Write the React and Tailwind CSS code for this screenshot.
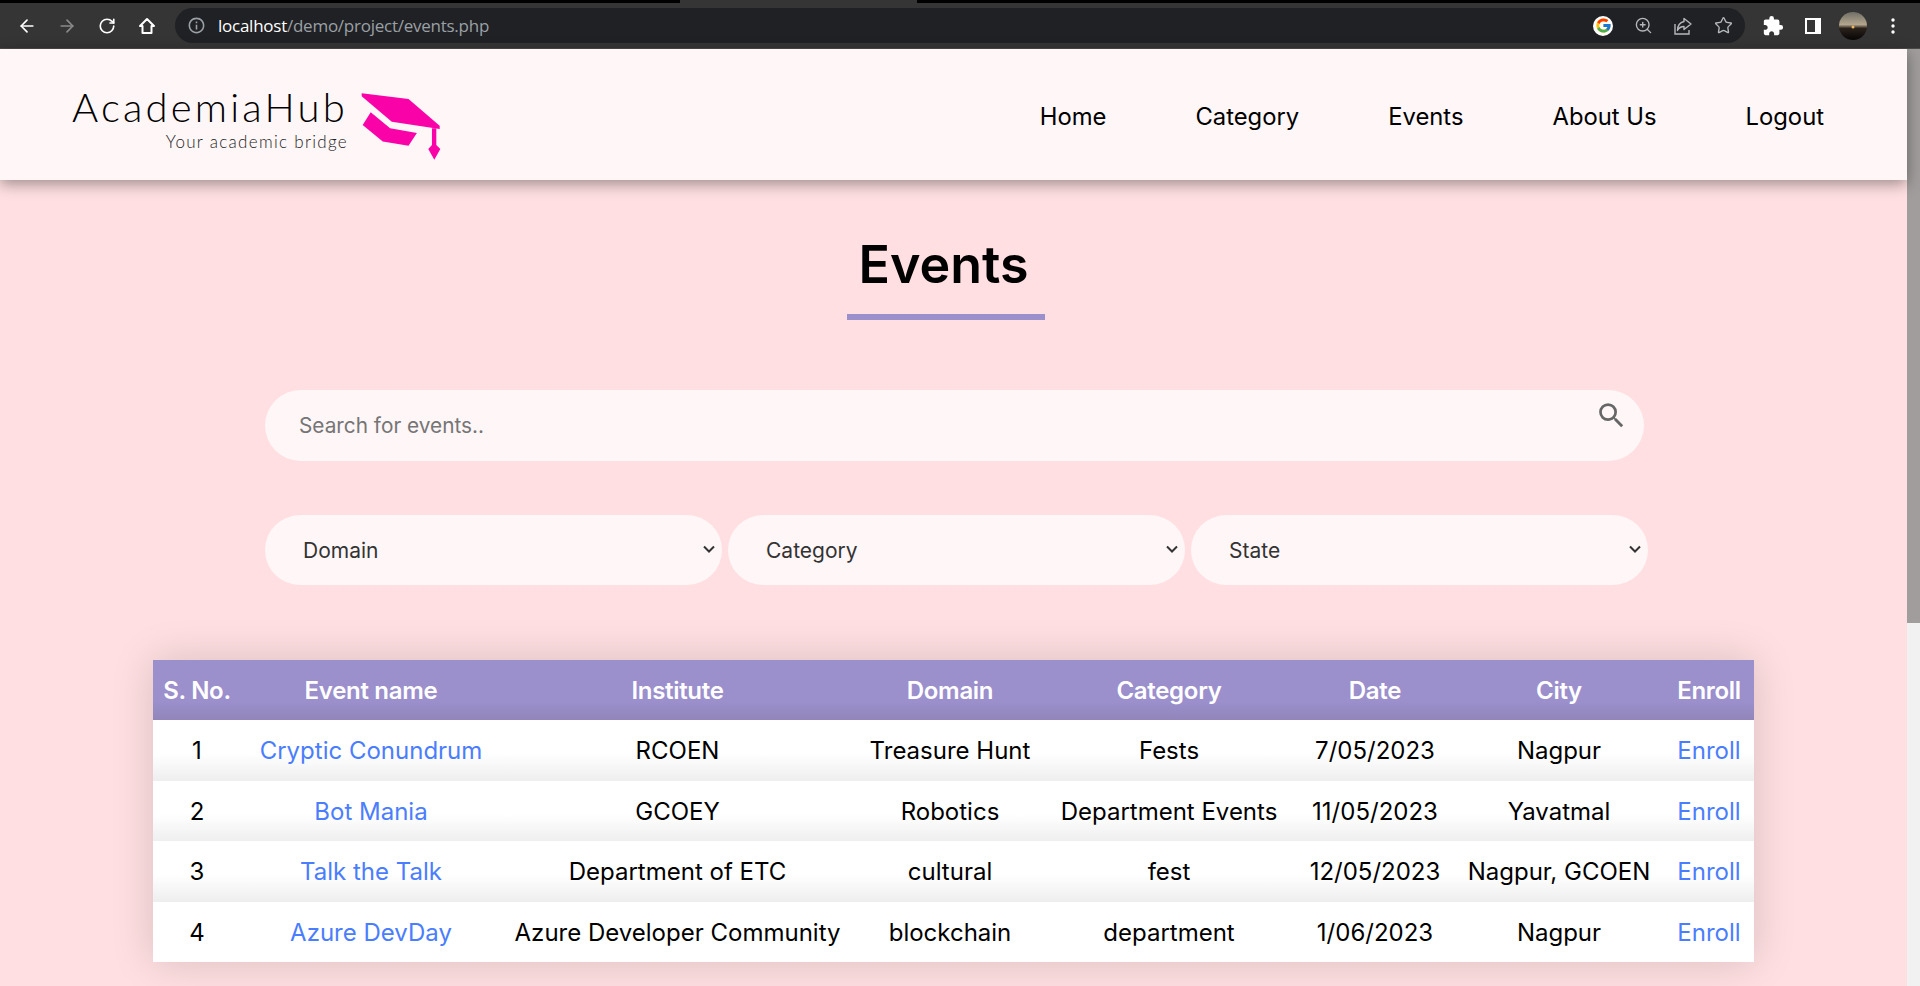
import React from 'react';
import { ArrowLeft, ArrowRight, RotateCw, ZoomIn, Star } from 'lucide-react';
import { MdSearch, MdExtension, MdInfoOutline } from 'react-icons/md';
import { FcGoogle } from 'react-icons/fc';

const events = [
  { id: 1, name: 'Cryptic Conundrum', institute: 'RCOEN', domain: 'Treasure Hunt', category: 'Fests', date: '7/05/2023', city: 'Nagpur' },
  { id: 2, name: 'Bot Mania', institute: 'GCOEY', domain: 'Robotics', category: 'Department Events', date: '11/05/2023', city: 'Yavatmal' },
  { id: 3, name: 'Talk the Talk', institute: 'Department of ETC', domain: 'cultural', category: 'fest', date: '12/05/2023', city: 'Nagpur, GCOEN' },
  { id: 4, name: 'Azure DevDay', institute: 'Azure Developer Community', domain: 'blockchain', category: 'department', date: '1/06/2023', city: 'Nagpur' },
];

const links = ['Home', 'Category', 'Events', 'About Us', 'Logout'];
const columns = ['S. No.', 'Event name', 'Institute', 'Domain', 'Category', 'Date', 'City', 'Enroll'];
const widths = ['w-[88px]', 'w-[260px]', 'w-[353px]', 'w-[192px]', 'w-[246px]', 'w-[166px]', 'w-[202px]', 'w-[94px] pl-[4px]'];

function Slot({ children }) {
  return <div className="w-10 h-[35px] flex items-center justify-center shrink-0">{children}</div>;
}

function BrowserBar() {
  return (
    <div className="bg-[#353535]">
      {/* tab strip */}
      <div className="flex h-[3px] bg-black">
        <div className="w-[680px]"></div>
        <div className="w-[237px] bg-[#353535]"></div>
      </div>
      <div className="flex h-[46px] pt-[5px] border-b border-[#4b4b4b]">
        <div className="flex pl-[7px] w-[175px] text-white">
          <Slot><ArrowLeft size={20} strokeWidth={2} /></Slot>
          <Slot><ArrowRight size={20} strokeWidth={2} className="text-[#8a8a8a]" /></Slot>
          <Slot><RotateCw size={18} strokeWidth={2.2} /></Slot>
          <Slot>
            <svg width="18" height="18" viewBox="0 0 18 18" fill="none" stroke="currentColor" strokeWidth="2">
              <path d="M9 2 2 9h2.5v7h9V9H16z" strokeLinejoin="round" />
            </svg>
          </Slot>
        </div>
        <div className="w-[1570px] h-[35px] bg-[#202124] rounded-full flex items-center pl-[12px] pr-[2px]">
          <MdInfoOutline size={19} className="text-[#9aa0a6]" />
          <div className="ml-[12px] text-[17px] tracking-[-0.25px] text-[#9aa0a6]" style={{ fontFamily: '"Open Sans", sans-serif' }}>
            <span className="text-white">localhost</span>/demo/project/events.php
          </div>
          <div className="ml-auto flex text-[#b5b8bb]">
            <Slot>
              <div className="w-5 h-5 rounded-full bg-white flex items-center justify-center"><FcGoogle size={17} /></div>
            </Slot>
            <Slot><ZoomIn size={19} strokeWidth={1.7} /></Slot>
            <Slot>
              <svg width="20" height="20" viewBox="0 0 20 20" fill="none" stroke="currentColor" strokeWidth="1.4">
                <path d="M2 8v10h14v-4" />
                <path d="M11 2.5 18 8l-7 5.5v-3c-3 0-5 1-6.5 4 0-5 2.500-8 6.500-9z" strokeLinejoin="round" />
              </svg>
            </Slot>
            <Slot><Star size={19} strokeWidth={1.7} /></Slot>
          </div>
        </div>
        <div className="flex pl-2 text-white">
          <Slot><MdExtension size={22} /></Slot>
          <Slot>
            <svg width="18" height="18" viewBox="0 0 18 18" fill="none">
              <rect x="1" y="1" width="16" height="16" fill="#fff" />
              <rect x="3" y="3" width="8" height="12" fill="#353535" />
            </svg>
          </Slot>
          <Slot>
            <svg width="28" height="28" viewBox="0 0 28 28">
              <defs>
                <linearGradient id="dusk" x1="0" y1="0" x2="0" y2="1">
                  <stop offset="0" stopColor="#6f6e66" />
                  <stop offset="0.45" stopColor="#b3a68d" />
                  <stop offset="0.58" stopColor="#2a211b" />
                  <stop offset="1" stopColor="#080606" />
                </linearGradient>
              </defs>
              <circle cx="14" cy="14" r="14" fill="url(#dusk)" />
              <circle cx="14" cy="15" r="1.500" fill="#f0b45a" />
            </svg>
          </Slot>
          <Slot>
            <svg width="6" height="18" viewBox="0 0 6 18" fill="#fff">
              <circle cx="3" cy="3" r="1.700" />
              <circle cx="3" cy="9" r="1.700" />
              <circle cx="3" cy="15" r="1.700" />
            </svg>
          </Slot>
        </div>
      </div>
    </div>
  );
}

function Logo() {
  return (
    <div className="flex items-center" style={{ fontFamily: 'Lato, sans-serif' }}>
      <div className="flex flex-col items-end w-[277px] mt-[11px]">
        <span className="text-[40px] leading-[42px] font-light text-black tracking-[3.2px] whitespace-nowrap">AcademiaHub</span>
        <span className="text-[17px] leading-[26px] mt-[1px] font-light text-[#222] tracking-[1.3px] whitespace-nowrap">Your academic bridge</span>
      </div>
      <svg className="ml-[12px] mt-[23px]" width="82" height="72" viewBox="60 38 245 206" fill="#f903a8">
        <path d="M65 43 205 60 298 140V150L155 128 65 52Z" />
        <path d="M92 100 150 148 230 162 205 200 128 187 68 138Z" />
        <path d="M275 148H288V198L300 210 282 242 264 210 275 198Z" />
      </svg>
    </div>
  );
}

export default function App() {
  return (
    <div className="h-[986px] overflow-hidden flex flex-col bg-[#ffdfe1]" style={{ fontFamily: 'Inter, sans-serif' }}>
      <BrowserBar />
      <div className="flex flex-1 min-h-0">
        <div className="flex-1 min-w-0">
          {/* Navbar */}
          <nav className="relative h-[131px] bg-[#fff6f7] shadow-[0_4px_14px_rgba(0,0,0,0.38)] flex items-center justify-between pl-[71px] pr-[83px]">
            <Logo />
            <ul className="flex gap-[89px] pt-[5px] text-[23.8px] text-black">
              {links.map(link => <li key={link}>{link}</li>)}
            </ul>
          </nav>

          {/* Title */}
          <div className="flex flex-col items-center mr-[15px] mt-[53px]">
            <h1 className="text-[52px] leading-[64px] font-semibold text-black pr-[5px]">Events</h1>
            <div className="w-[198px] h-[6px] mt-[17px] bg-[#9b8fcc]"></div>
          </div>

          {/* Search */}
          <div className="relative ml-[265px] w-[1379px] mt-[70px]">
            <input
              type="text"
              placeholder="Search for events.."
              className="w-full h-[71px] rounded-full bg-[#fff6f7] pl-[34px] text-[20.8px] outline-none placeholder:text-[#757575]"
            />
            <MdSearch size={33} className="absolute right-[16px] top-[9px] text-[#666]" />
          </div>

          {/* Filters */}
          <div className="flex gap-[6px] ml-[265px] w-[1383px] mt-[54px]">
            {['Domain', 'Category', 'State'].map(label => (
              <div key={label} className="relative flex-1 min-w-0">
                <select className="appearance-none w-full h-[70px] rounded-full bg-[#fff6f7] pl-[38px] pt-[2px] text-[21px] text-[#333] outline-none">
                  <option>{label}</option>
                </select>
                <svg className="absolute right-[7px] top-[30px]" width="12" height="9" viewBox="0 0 12 9" fill="none" stroke="#333" strokeWidth="2">
                  <path d="M1 1.500 6 6.500 11 1.500" />
                </svg>
              </div>
            ))}
          </div>

          {/* Events table */}
          <div className="w-[1601px] mx-auto mt-[75px] shadow-[0_0_40px_rgba(0,0,0,0.15)]">
            <table className="w-full table-fixed text-[24px] text-black text-center">
              <thead>
                <tr className="h-[60px] bg-linear-to-b from-[#9b8fcc] from-70% to-[#9285ba] text-white">
                  {columns.map((col, i) => (
                    <th key={col} className={`${widths[i]} font-semibold p-0 pt-[2px] tracking-[-0.3px]`}>{col}</th>
                  ))}
                </tr>
              </thead>
              <tbody>
                {events.map((event, i) => (
                  <tr
                    key={event.id}
                    className={i < 3 ? 'h-[60.5px] pt-[2px] bg-linear-to-b from-white from-55% to-[#eeeeee]' : 'h-[60.5px] bg-white'}
                  >
                    <td className="pt-[2px]">{event.id}</td>
                    <td className="pt-[2px] text-[#4a7dff]">{event.name}</td>
                    <td className="pt-[2px]">{event.institute}</td>
                    <td className="pt-[2px]">{event.domain}</td>
                    <td className="pt-[2px]">{event.category}</td>
                    <td className="pt-[2px]">{event.date}</td>
                    <td className="pt-[2px]">{event.city}</td>
                    <td className="pt-[2px] text-[#4a7dff] pl-[4px]">Enroll</td>
                  </tr>
                ))}
              </tbody>
            </table>
          </div>
        </div>

        {/* Scrollbar */}
        <div className="w-[13px] bg-[#f1f1f1]">
          <div className="h-[574px] bg-[#a09d9c]"></div>
        </div>
      </div>
    </div>
  );
}
